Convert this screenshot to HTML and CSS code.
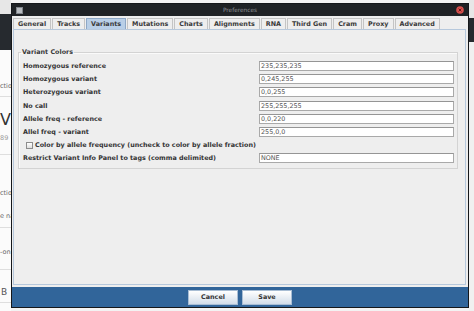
FILE: index.html
```html
<!DOCTYPE html>
<html>
    <head>
        <meta name="viewport" content="width=device-width, initial-scale=1.0">
        <meta charset="utf-8">
        <title>Preferences</title>
        <link rel="stylesheet" href="styles.css">
    </head>
    <body>
        <div class="desk">
            <div class="side left">
                <div class="band-top"></div>
                <div class="band-dark"></div>
                <div class="row r1"><div class="frag">ctio</div></div>
                <div class="row r2"><div class="frag big">V</div><div class="frag pale">89</div></div>
                <div class="row r3"><div class="frag">ctio</div><div class="frag">e na</div></div>
                <div class="row r4"><div class="frag">-on</div></div>
                <div class="row r5"><div class="frag mid">B</div></div>
            </div>
            <div class="middle"></div>
            <div class="side right">
                <div class="band-top"></div>
                <div class="band-dark"></div>
            </div>
        </div>

        <div class="dialog">
            <div class="titlebar">
                <div class="appicon"></div>
                <div class="title">Preferences</div>
                <svg class="close" width="8" height="8" viewBox="0 0 8 8">
                    <circle cx="4" cy="4" r="3.8" fill="#d8504d"/>
                    <path d="M2.6 2.6 L5.4 5.4 M5.4 2.6 L2.6 5.4" stroke="#5a1414" stroke-width="0.9"/>
                </svg>
            </div>

            <div class="tabs">
                <div class="tab">General</div>
                <div class="tab">Tracks</div>
                <div class="tab active">Variants</div>
                <div class="tab">Mutations</div>
                <div class="tab">Charts</div>
                <div class="tab">Alignments</div>
                <div class="tab">RNA</div>
                <div class="tab">Third Gen</div>
                <div class="tab">Cram</div>
                <div class="tab">Proxy</div>
                <div class="tab">Advanced</div>
            </div>

            <div class="panel">
                <fieldset class="group">
                    <legend>Variant Colors</legend>
                    <div class="form">
                        <div class="label">Homozygous reference</div>
                        <div class="field">235,235,235</div>
                        <div class="label">Homozygous variant</div>
                        <div class="field">0,245,255</div>
                        <div class="label">Heterozygous variant</div>
                        <div class="field">0,0,255</div>
                        <div class="label">No call</div>
                        <div class="field">255,255,255</div>
                        <div class="label">Allele freq - reference</div>
                        <div class="field">0,0,220</div>
                        <div class="label">Allel freq - variant</div>
                        <div class="field">255,0,0</div>
                        <div class="check">
                            <span class="box"></span>
                            <span>Color by allele frequency (uncheck to color by allele fraction)</span>
                        </div>
                        <div class="label">Restrict Variant Info Panel to tags (comma delimited)</div>
                        <div class="field">NONE</div>
                    </div>
                </fieldset>
            </div>

            <div class="footer">
                <div class="btn">Cancel</div>
                <div class="btn">Save</div>
            </div>
        </div>
    </body>
</html>
```

FILE: styles.css
```css
*{
    box-sizing: border-box;
}
body{
    margin:0;
    background-color:#f4f4f4;
    font-family:"DejaVu Sans", sans-serif;
    overflow:hidden;
}

/* page behind the dialog */
.desk{
    display:flex;
    width:474px;
    height:311px;
}
.side{
    display:flex;
    flex-direction:column;
}
.side.left{
    width:11px;
    background-color:#fbfbfb;
}
.side.right{
    width:5px;
    background-color:#f0f0f0;
    overflow:hidden;
}
.middle{
    flex:1;
    background-color:#f3f3f3;
}
.band-top{
    height:14px;
    background-color:#e7e7e7;
}
.band-dark{
    height:36px;
    background-color:#262a2f;
}
.side.right .band-top{
    height:18px;
}
.side.right .band-dark{
    height:24px;
}
.row{
    display:flex;
    flex-direction:column;
    border-bottom:1px solid #dedede;
}
.frag{
    white-space:nowrap;
    font-size:6.5px;
    line-height:8px;
    color:#666;
}
.frag.big{
    font-size:16px;
    line-height:16px;
    color:#333;
}
.frag.pale{
    color:#9a9a9a;
    margin-top:6px;
}
.frag.mid{
    font-size:9px;
    line-height:10px;
    color:#555;
    padding-left:1px;
}
.r1{ height:47px; justify-content:flex-end; padding-bottom:6px; }
.r2{ height:58px; padding-top:15px; }
.r3{ height:73px; padding-top:34px; }
.r3 .frag + .frag{ margin-top:15px; }
.r4{ height:42px; padding-top:20px; }
.r5{ height:33px; padding-top:17px; }

/* dialog window */
.dialog{
    position:absolute;
    left:11px;
    top:3px;
    width:458px;
    height:305px;
    border:1px solid #15171a;
    background-color:#eeeeee;
    display:flex;
    flex-direction:column;
}
.titlebar{
    height:12px;
    background-color:#1f2225;
    display:grid;
    grid-template-columns:1fr auto 1fr;
    align-items:center;
    padding:0 4px;
}
.appicon{
    width:7px;
    height:7px;
    background-color:#b8bcc0;
    border:1px solid #80848a;
}
.title{
    color:#8e9195;
    font-size:5.8px;
}
.close{
    justify-self:end;
    display:block;
}

.tabs{
    height:13px;
    display:flex;
    align-items:flex-end;
    gap:1px;
    padding-left:1px;
}
.tab{
    height:11px;
    padding:0 4px;
    border:1px solid #c4c4c4;
    border-bottom:none;
    font-size:6.4px;
    font-weight:bold;
    color:#3a3a3a;
    display:flex;
    align-items:center;
}
.tab.active{
    background-color:#b9cfe7;
    border-color:#8ea8c6;
}

.panel{
    flex:1;
    margin:0 2px 0 1px;
    border:1px solid #b6c8dc;
    padding:18px 7px 0 4px;
}
.group{
    margin:0;
    padding:5px 3px 5px 4px;
    border:1px solid #d3d3d3;
    box-shadow:inset 1px 1px 0 #fafafa;
}
.group legend{
    font-size:6.4px;
    line-height:8px;
    font-weight:bold;
    color:#3a3a3a;
    padding:0 1px;
    margin-left:-2px;
}
.form{
    display:grid;
    grid-template-columns:1fr 195px;
    grid-auto-rows:10px;
    row-gap:3.2px;
    align-items:center;
    font-size:6.4px;
}
.label{
    font-weight:bold;
    color:#333;
    white-space:nowrap;
}
.field{
    height:10px;
    background-color:#fff;
    border:1px solid #a9a9a9;
    border-top-color:#959595;
    color:#555;
    padding-left:1px;
    line-height:8px;
}
.check{
    grid-column:1 / 3;
    display:flex;
    align-items:center;
    gap:2px;
    padding-left:3px;
    font-weight:bold;
    color:#333;
    height:12px;
    white-space:nowrap;
}
.box{
    width:7px;
    height:7px;
    border:1px solid #8d8d8d;
    background:linear-gradient(#ffffff, #dedede);
}

.footer{
    height:20px;
    margin-top:2px;
    background-color:#31659a;
    display:flex;
    justify-content:center;
    align-items:center;
    gap:4px;
}
.btn{
    width:50px;
    height:15px;
    border:1px solid #a8bdd4;
    background:linear-gradient(#ffffff, #d2dde9);
    font-size:6.4px;
    font-weight:bold;
    color:#333;
    display:flex;
    align-items:center;
    justify-content:center;
}
```
